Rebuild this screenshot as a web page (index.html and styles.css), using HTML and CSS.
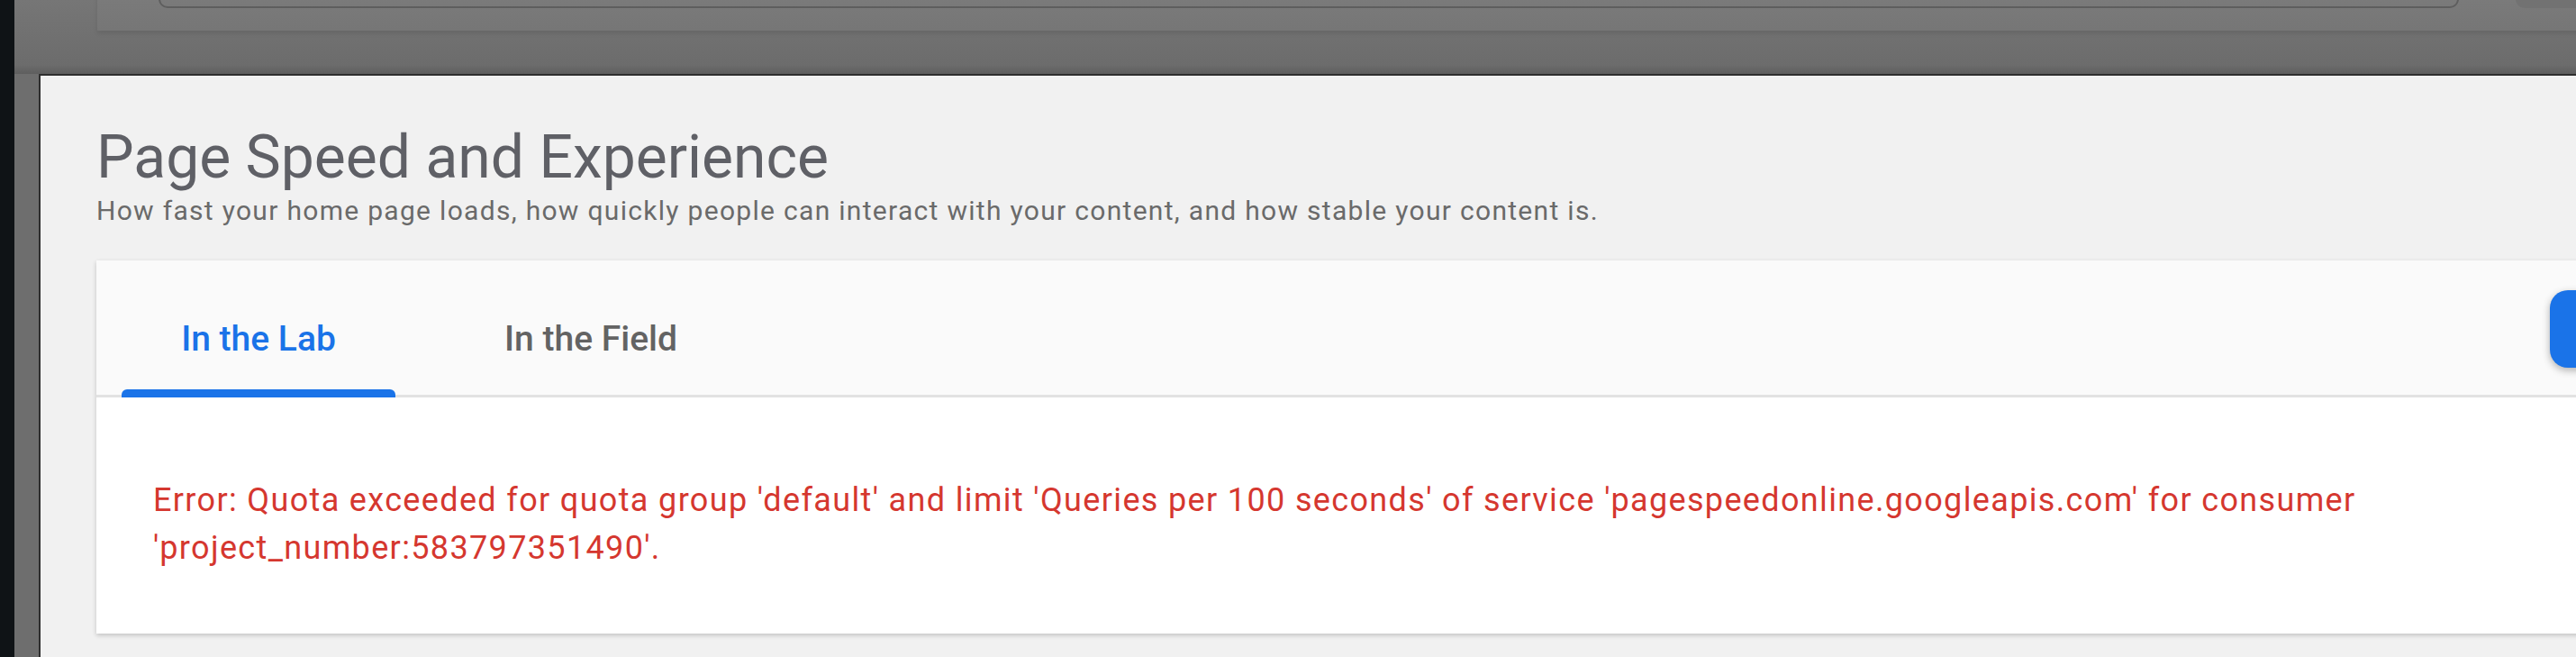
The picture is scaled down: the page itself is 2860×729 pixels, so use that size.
FILE: index.html
```html
<!DOCTYPE html>
<html lang="en">
<head>
<meta charset="utf-8">
<title>Page Speed and Experience</title>
<link rel="stylesheet" href="styles.css">
</head>
<body>
  <div class="edge"></div>
  <div class="screen">
    <div class="backdrop">
      <div class="bg-card">
        <div class="bg-row">
          <div class="bg-input"></div>
          <div class="bg-button"></div>
        </div>
      </div>
    </div>
    <section class="dialog">
      <h1 class="title">Page Speed and Experience</h1>
      <p class="subtitle">How fast your home page loads, how quickly people can interact with your content, and how stable your content is.</p>
      <div class="card">
        <div class="tabbar">
          <div class="tab active">In the Lab</div>
          <div class="tab">In the Field</div>
          <div class="fab"></div>
        </div>
        <div class="card-body">
          <p class="error">Error: Quota exceeded for quota group 'default' and limit 'Queries per 100 seconds' of service 'pagespeedonline.googleapis.com' for consumer 'project_number:583797351490'.</p>
        </div>
      </div>
    </section>
  </div>
</body>
</html>
```
FILE: styles.css
```css
html, body {
  margin: 0;
  padding: 0;
}
body {
  width: 2860px;
  height: 729px;
  overflow: hidden;
  display: flex;
  background: #0f1316;
  font-family: Roboto, "Liberation Sans", sans-serif;
}
.edge {
  width: 16px;
  flex: none;
  background: #0f1316;
}
.screen {
  flex: 1;
  min-width: 0;
  overflow: hidden;
  background: #6e6e6e;
  display: flex;
  flex-direction: column;
}
.backdrop {
  height: 82px;
  flex: none;
  background: linear-gradient(#767676, #6c6c6c 88%, #5e5e5e);
}
.bg-card {
  margin-left: 92px;
  width: 2900px;
  height: 74px;
  background: linear-gradient(#7f7f7f, #767676);
  box-shadow: 0 3px 5px rgba(0, 0, 0, 0.1);
}
.bg-row {
  display: flex;
  align-items: flex-end;
  gap: 63px;
  padding-left: 68px;
  margin-top: -40px;
}
.bg-input {
  width: 2550px;
  height: 45px;
  border: 2px solid #5e5e5e;
  border-radius: 0 0 10px 10px;
}
.bg-button {
  width: 120px;
  height: 49px;
  background: #727272;
  border-radius: 0 0 0 10px;
}
.dialog {
  margin-left: 27px;
  width: 2900px;
  flex: 1;
  background: #f1f1f1;
  border-top: 2px solid #2e2e2e;
  border-left: 2px solid #2e2e2e;
  padding: 55px 0 0 62px;
}
.title {
  margin: 0;
  font-size: 66px;
  line-height: 72px;
  font-weight: 400;
  color: #5f6066;
}
.subtitle {
  margin: 5px 0 0;
  font-size: 30px;
  line-height: 36px;
  letter-spacing: 1.3px;
  color: #6a6a6a;
}
.card {
  margin-top: 37px;
  width: 2832px;
  background: #ffffff;
  box-shadow: 0 2px 5px rgba(0, 0, 0, 0.2);
}
.tabbar {
  display: flex;
  gap: 65px;
  padding: 0 28px;
  background: #fafafa;
  border-bottom: 3px solid #e2e2e2;
  height: 149px;
}
.tab {
  position: relative;
  width: 304px;
  padding-top: 63px;
  text-align: center;
  font-size: 39px;
  line-height: 48px;
  font-weight: 500;
  color: #636363;
}
.tab.active {
  color: #1a73e8;
}
.tab.active::after {
  content: "";
  position: absolute;
  left: 0;
  right: 0;
  bottom: -3px;
  height: 9px;
  background: #1a73e8;
  border-radius: 6px 6px 0 0;
}
.fab {
  margin-left: auto;
  margin-top: 33px;
  width: 80px;
  height: 86px;
  background: #1a73e8;
  border-radius: 20px;
  box-shadow: 0 3px 8px rgba(0, 0, 0, 0.3);
}
.card-body {
  padding: 88px 63px 68px;
}
.error {
  margin: 0;
  font-size: 36px;
  line-height: 53px;
  letter-spacing: 1.35px;
  color: #d5372f;
}
```
